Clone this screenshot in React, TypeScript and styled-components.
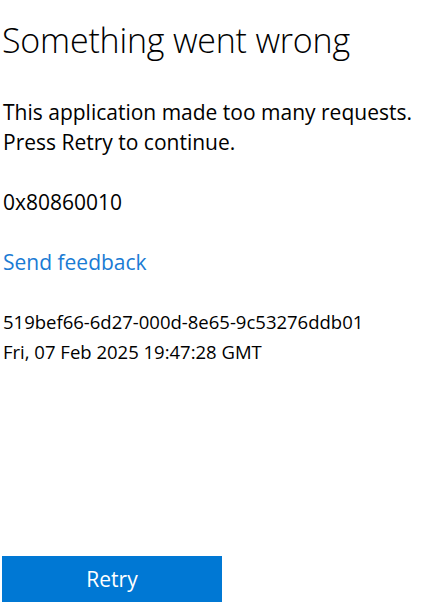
import React from 'react';
import styled, { createGlobalStyle } from 'styled-components';

const GlobalStyle = createGlobalStyle`
  html, body {
    margin: 0;
    padding: 0;
    background: #ffffff;
  }
  body {
    font-family: "Open Sans", "Noto Sans", "Liberation Sans", sans-serif;
    color: #000000;
    overflow: hidden;
  }
`;

const Page = styled.main`
  height: 602px;
  display: flex;
  flex-direction: column;
  padding: 0 0 0 2px;
  box-sizing: border-box;
`;

const Title = styled.h1`
  margin: 20px 0 0;
  font-size: 34px;
  line-height: 40px;
  font-weight: 300;
  letter-spacing: -0.2px;
`;

const Text = styled.p<{ $small?: boolean; $gap?: number }>`
  margin: ${({ $gap }) => $gap ?? 30}px 0 0 1px;
  font-size: ${({ $small }) => ($small ? '18.5px' : '21px')};
  line-height: 30px;
  font-weight: 400;
`;

const FeedbackLink = styled.a`
  display: block;
  margin: 30px 0 0 1px;
  font-size: 21px;
  line-height: 30px;
  color: #1a7bd4;
  text-decoration: none;
  cursor: pointer;
`;

const Details = styled.div`
  margin-top: 30px;
  display: flex;
  flex-direction: column;
`;

const Footer = styled.div`
  margin-top: auto;
`;

const RetryButton = styled.button`
  display: block;
  width: 220px;
  height: 46px;
  border: none;
  border-radius: 0;
  background: #0078d4;
  color: #ffffff;
  font-family: inherit;
  font-size: 21px;
  padding: 0;
  cursor: pointer;
`;

export default function App() {
  return (
    <>
      <GlobalStyle />
      <Page>
        <Title>Something went wrong</Title>
        <Text $gap={37}>
          This application made too many requests.
          <br />
          Press Retry to continue.
        </Text>
        <Text>0x80860010</Text>
        <FeedbackLink>Send feedback</FeedbackLink>
        <Details>
          <Text $small $gap={0}>519bef66-6d27-000d-8e65-9c53276ddb01</Text>
          <Text $small $gap={0}>Fri, 07 Feb 2025 19:47:28 GMT</Text>
        </Details>
        <Footer>
          <RetryButton>Retry</RetryButton>
        </Footer>
      </Page>
    </>
  );
}
